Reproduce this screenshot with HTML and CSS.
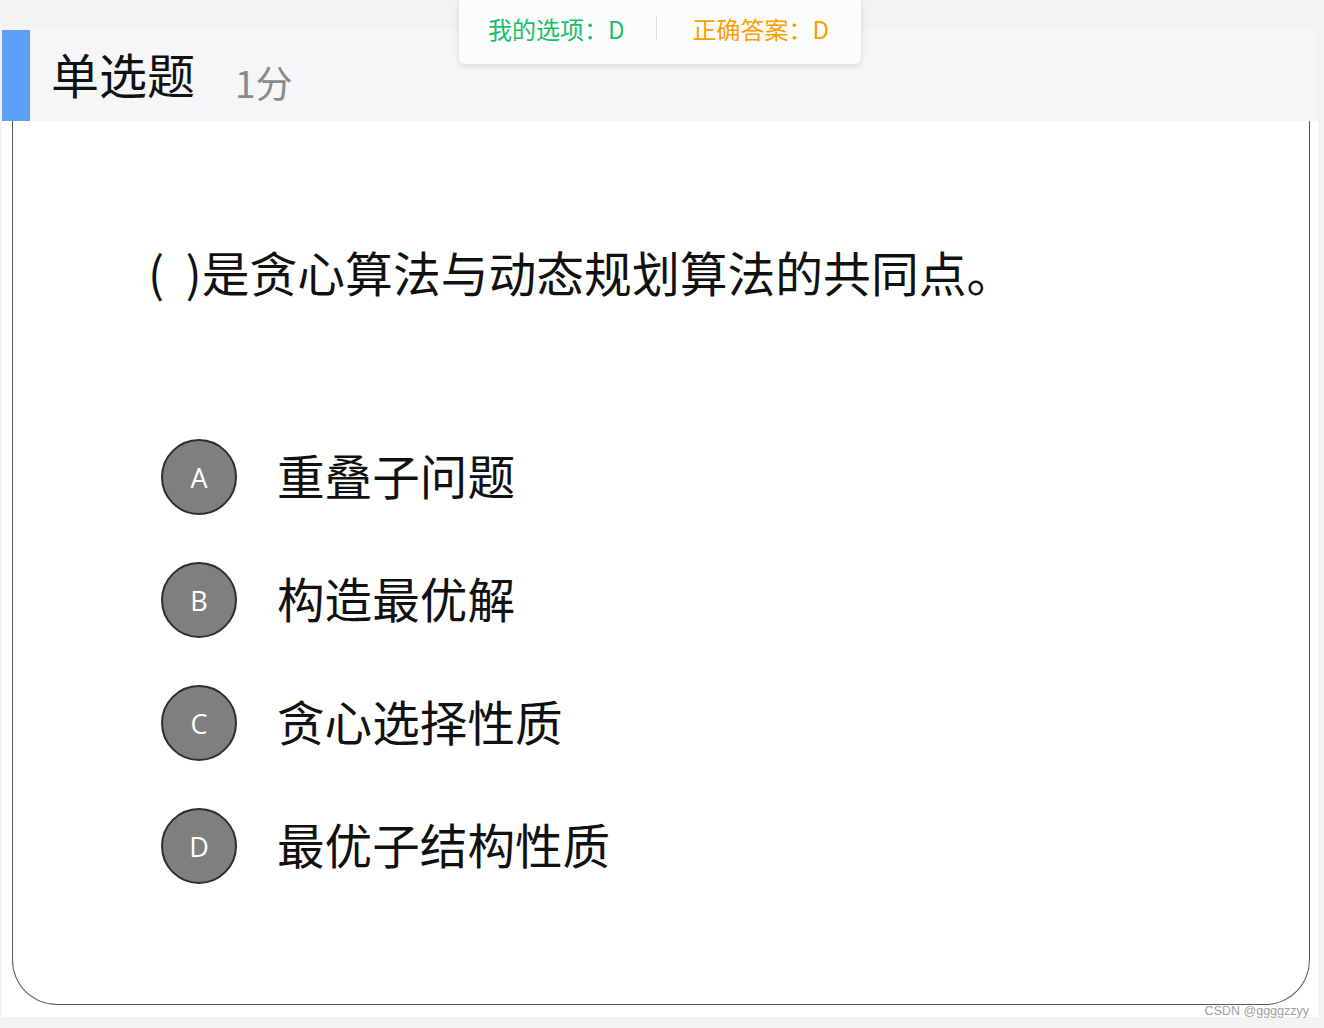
FILE: index.html
```html
<!DOCTYPE html>
<html lang="zh">
<head>
<meta charset="utf-8">
<title>单选题</title>
<link rel="stylesheet" href="styles.css">
</head>
<body>
<div class="page">
  <div class="panel">
    <div class="header">
      <div class="bar"></div>
      <div class="title">单选题</div>
      <div class="score">1分</div>
    </div>
    <div class="card">
      <div class="question">(&nbsp;&nbsp;)是贪心算法与动态规划算法的共同点。</div>
      <div class="options">
        <div class="option"><span class="circle">A</span><span class="label">重叠子问题</span></div>
        <div class="option"><span class="circle">B</span><span class="label">构造最优解</span></div>
        <div class="option"><span class="circle">C</span><span class="label">贪心选择性质</span></div>
        <div class="option"><span class="circle">D</span><span class="label">最优子结构性质</span></div>
      </div>
    </div>
  </div>
  <div class="popover">
    <span class="mine">我的选项：D</span>
    <span class="divider"></span>
    <span class="right">正确答案：D</span>
  </div>
  <div class="watermark">CSDN @ggggzzyy</div>
</div>
</body>
</html>
```
FILE: styles.css
```css
html, body {
  margin: 0;
  padding: 0;
}
body {
  background: #f2f2f2;
  font-family: "Noto Sans CJK SC", "Noto Sans", sans-serif;
  color: #111;
}
.page {
  position: relative;
  width: 1324px;
  height: 1028px;
  padding: 30px 6px 11px 2px;
  box-sizing: border-box;
  background: #f3f3f3;
}
.panel {
  background: #fff;
  height: 987px;
  display: flex;
  flex-direction: column;
}
.header {
  height: 91px;
  background: #f5f6f8;
  display: flex;
  align-items: baseline;
  flex-shrink: 0;
}
.bar {
  width: 28px;
  height: 91px;
  background: #5f9ff6;
  align-self: stretch;
}
.title {
  font-size: 48px;
  line-height: 87px;
  margin-left: 21px;
  color: #111;
}
.score {
  font-size: 37px;
  color: #8a8a8a;
  margin-left: 40px;
  position: relative;
  top: 4px;
}
.card {
  flex: 1;
  margin: 0 8px 12px 10px;
  border: 1px solid #5a5a5a;
  border-top: none;
  border-radius: 0 0 45px 45px;
  padding: 127px 0 0 135px;
  box-sizing: border-box;
}
.question {
  font-size: 47.8px;
  line-height: 48px;
  color: #111;
  white-space: nowrap;
}
.options {
  margin-top: 143px;
  padding-left: 13px;
  display: flex;
  flex-direction: column;
  gap: 47px;
}
.option {
  display: flex;
  align-items: center;
  height: 76px;
}
.circle {
  width: 76px;
  height: 76px;
  box-sizing: border-box;
  border-radius: 50%;
  background: #7f7f7f;
  border: 2px solid #2e2e2e;
  color: #fff;
  font-family: "Open Sans", "Noto Sans", sans-serif;
  font-size: 27px;
  display: flex;
  align-items: center;
  justify-content: center;
  flex-shrink: 0;
}
.label {
  margin-left: 40px;
  font-size: 47.6px;
  line-height: 1;
  padding-bottom: 5px;
  color: #111;
}
.popover {
  position: absolute;
  top: 0;
  left: 459px;
  width: 402px;
  height: 64px;
  box-sizing: border-box;
  background: #fbfcfc;
  border-radius: 0 0 6px 6px;
  box-shadow: 0 2px 6px rgba(0, 0, 0, 0.12);
  display: flex;
  align-items: center;
  padding: 0 0 8px 29px;
  font-size: 24px;
}
.mine {
  color: #19be6b;
}
.right {
  color: #ff9d00;
}
.divider {
  width: 1px;
  height: 24px;
  background: #dcdcdc;
  margin: 0 36px 0 31px;
}
.watermark {
  position: absolute;
  right: 15px;
  bottom: 10px;
  font-family: "Liberation Sans", Arial, sans-serif;
  font-size: 12.5px;
  color: #a0a0a0;
}
```
